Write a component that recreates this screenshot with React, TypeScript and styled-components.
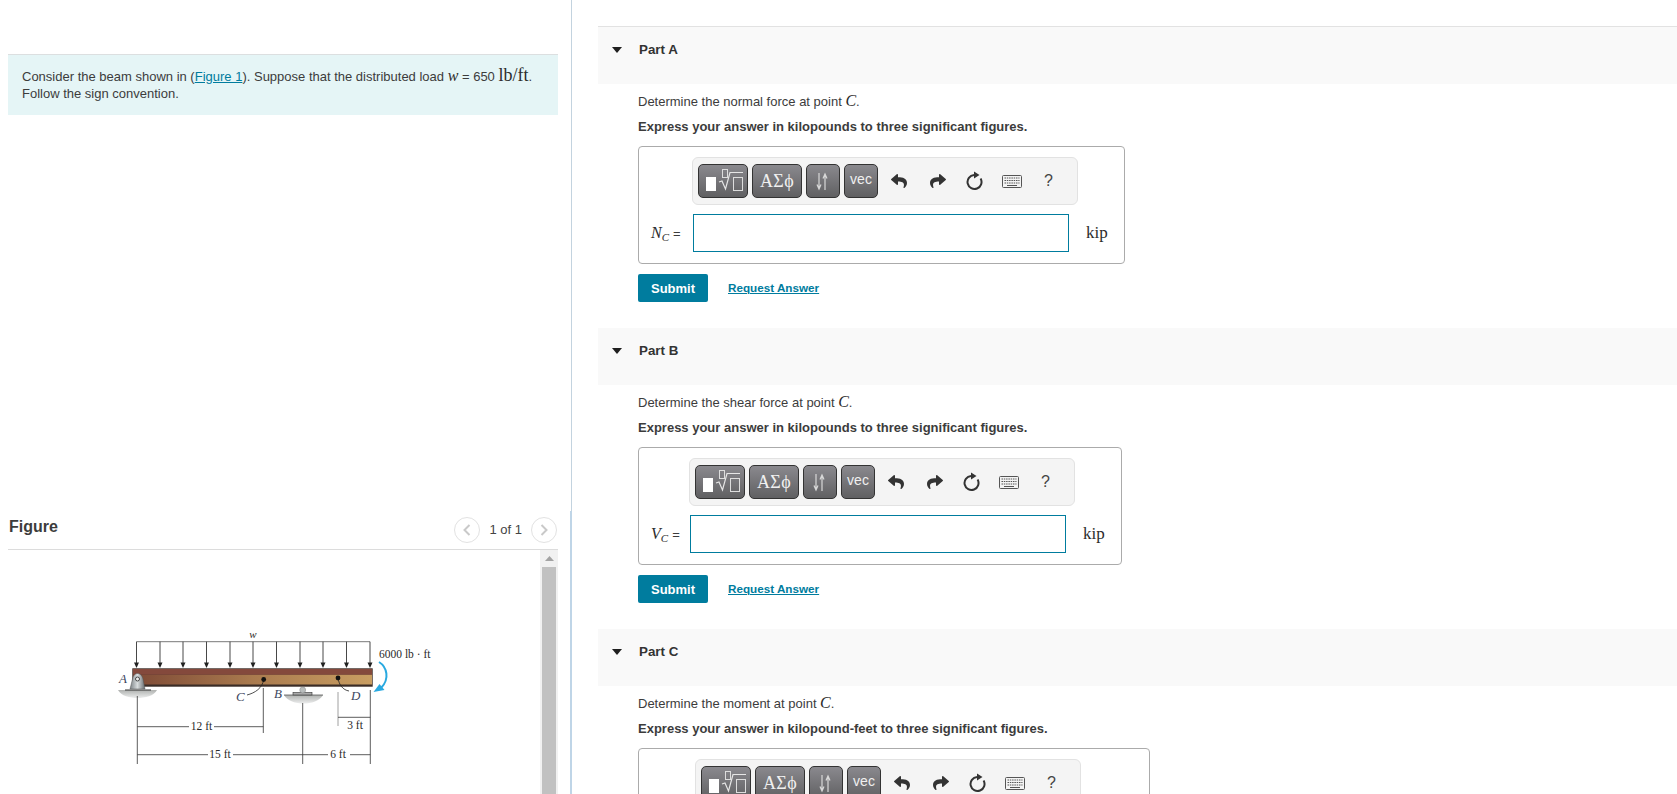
import React from "react";
import styled, { createGlobalStyle } from "styled-components";
import { FaReply, FaShare } from "react-icons/fa";

const Global = createGlobalStyle`
  html, body { margin: 0; padding: 0; background: #fff; }
  body { font-family: "Liberation Sans", Arial, sans-serif; color: #3c3c3c; }
`;

const Page = styled.div`
  display: flex;
  height: 794px;
  overflow: hidden;
`;
const LeftColumn = styled.aside`
  width: 550px;
  margin: 0 12px 0 8px;
  flex: none;
`;
const Divider = styled.div`
  width: 2px;
  flex: none;
  display: flex;
  flex-direction: column;
  align-items: flex-end;
`;
const DividerUpper = styled.div`
  width: 1px;
  height: 511px;
  background: #c3d3df;
`;
const DividerLower = styled.div`
  width: 2px;
  flex: 1;
  background: #bfd5e7;
`;
const RightColumn = styled.main`
  flex: 1;
  min-width: 0;
  padding: 26px 0 0 26px;
`;

const Prompt = styled.section`
  margin-top: 54px;
  height: 61px;
  box-sizing: border-box;
  border-top: 1px solid #dcdfe0;
  background: #e5f5f6;
  padding: 12px 14px;
  font-size: 13px;
  line-height: 17px;
`;
const TextLink = styled.a`
  color: #007c9e;
  text-decoration: underline;
`;
const Serif = styled.span`
  font-family: "Liberation Serif", "DejaVu Serif", serif;
  font-size: 16px;
  color: #2c2c2c;
`;
const Var = styled(Serif)`
  font-style: italic;
`;
const UnitInline = styled(Serif)`
  font-size: 18px;
  line-height: 0;
`;

const FigureHeader = styled.header`
  margin-top: 395px;
  height: 39px;
  display: flex;
  align-items: center;
  border-bottom: 1px solid #dcdcdc;
`;
const FigureTitle = styled.h2`
  margin: 0;
  padding-left: 1px;
  font-size: 16px;
  font-weight: 700;
  flex: 1;
  position: relative;
  top: -3px;
`;
const Pager = styled.div`
  display: flex;
  align-items: center;
  gap: 9px;
  margin-right: 1px;
  font-size: 13px;
  color: #444;
`;
const PageCircle = styled.span`
  width: 24px;
  height: 24px;
  border: 1px solid #e2e2e2;
  border-radius: 50%;
  display: flex;
  align-items: center;
  justify-content: center;
`;
const FigureBody = styled.div`
  display: flex;
  height: 246px;
`;
const FigureCanvas = styled.div`
  flex: 1;
  padding: 70px 0 0 92px;
`;
const Scrollbar = styled.div`
  width: 18px;
  background: #f1f1f1;
  display: flex;
  flex-direction: column;
  align-items: center;
`;
const ScrollUp = styled.div`
  height: 17px;
  width: 100%;
  display: flex;
  align-items: center;
  justify-content: center;
`;
const ScrollThumb = styled.div`
  width: 14px;
  flex: 1;
  background: #c1c1c1;
`;

const Part = styled.section`
  height: 301px;
  &:first-child {
    border-top: 1px solid #e2e2e2;
  }
`;
const PartHeader = styled.header`
  height: 57px;
  background: #f9f9f9;
  display: flex;
  align-items: flex-start;
  padding: 14px 0 0 14px;
  box-sizing: border-box;
`;
const Caret = styled.span`
  width: 0;
  height: 0;
  margin-top: 6px;
  border-left: 5.5px solid transparent;
  border-right: 5.5px solid transparent;
  border-top: 6px solid #1f1f1f;
`;
const PartTitle = styled.h3`
  margin: 0 0 0 17px;
  font-size: 13.33px;
  line-height: 17px;
  font-weight: 700;
  color: #333;
`;
const PartBody = styled.div`
  padding: 8px 0 0 40px;
`;
const Instruction = styled.p`
  margin: 0;
  height: 18px;
  line-height: 18px;
  font-size: 13px;
`;
const Emphasis = styled.p`
  margin: 8px 0 0;
  height: 18px;
  line-height: 18px;
  font-size: 13px;
  font-weight: 700;
`;
const AnswerBox = styled.div<{ $label: number; $unit: number }>`
  margin-top: 10px;
  box-sizing: border-box;
  width: ${(p) => p.$label + 376 + p.$unit}px;
  height: 118px;
  border: 1px solid #ababab;
  border-radius: 4px;
  display: grid;
  grid-template-columns: ${(p) => p.$label - 1}px 376px 1fr;
  grid-template-rows: 48px 38px;
  row-gap: 9px;
  padding-top: 10px;
`;
const Toolbar = styled.div`
  grid-column: 2 / 4;
  width: 386px;
  height: 48px;
  box-sizing: border-box;
  margin-left: -1px;
  background: #f4f4f4;
  border: 1px solid #e2e2e2;
  border-radius: 6px;
  display: flex;
  align-items: center;
  padding-left: 5px;
`;
const ToolGroup = styled.div`
  display: flex;
  gap: 4px;
`;
const ToolButton = styled.button<{ $w: number }>`
  width: ${(p) => p.$w}px;
  height: 34px;
  padding: 0;
  box-sizing: border-box;
  border: 1px solid #333;
  border-radius: 5px;
  background: linear-gradient(#8a898e, #606062);
  color: #f0f0f0;
  display: flex;
  align-items: center;
  justify-content: center;
`;
const GreekLabel = styled.span`
  font-family: "Liberation Serif", serif;
  font-size: 18px;
  letter-spacing: 0.3px;
`;
const VecLabel = styled.span`
  font-family: "Liberation Sans", sans-serif;
  font-size: 14px;
  margin-top: -4px;
`;
const PlainTools = styled.div`
  display: flex;
  align-items: center;
  color: #333;
`;
const PlainTool = styled.span<{ $w: number }>`
  width: ${(p) => p.$w}px;
  display: flex;
  justify-content: center;
  font-size: 16px;
`;
const Help = styled.span`
  font-size: 16px;
  color: #444;
`;
const FieldLabel = styled.div`
  display: flex;
  align-items: center;
  padding-left: 12px;
  font-size: 13px;
  gap: 4px;
`;
const Sub = styled.sub`
  font-size: 11px;
  vertical-align: -3px;
  line-height: 0;
`;
const Field = styled.input`
  box-sizing: border-box;
  width: 376px;
  height: 38px;
  margin: 0;
  border: 1px solid #007c9e;
  outline: none;
  padding: 0;
  background: #fff;
  border-radius: 0;
`;
const Unit = styled(Serif)`
  align-self: center;
  padding-left: 17px;
  font-size: 17px;
`;
const Actions = styled.div`
  margin-top: 10px;
  display: flex;
  align-items: center;
  gap: 20px;
`;
const Submit = styled.button`
  width: 70px;
  height: 28px;
  padding: 0;
  border: none;
  border-radius: 2px;
  background: #007c9e;
  color: #fff;
  font-family: inherit;
  font-size: 13px;
  font-weight: 700;
`;
const AnswerLink = styled(TextLink)`
  font-size: 11.7px;
  font-weight: 700;
  margin-top: -2px;
`;

const SqrtIcon = () => (
  <svg width="48" height="32" viewBox="1 1 48 32">
    <rect x="8" y="13" width="10" height="14" fill="#fff" />
    <rect x="24.5" y="5.5" width="5" height="8" fill="none" stroke="#ddd" />
    <path d="M21 18l3-1 3.5 8L32 8.5h13" fill="none" stroke="#e6e6e6" strokeWidth="1.2" />
    <rect x="35.5" y="13.5" width="9" height="13" fill="none" stroke="#ddd" />
  </svg>
);
const ArrowsIcon = () => (
  <svg width="32" height="32" viewBox="1 1 32 32">
    <path d="M13 9v15M11 20.5l2 4.5 2-4.5M19 26V11M17 14.5l2-4.5 2 4.5" fill="none" stroke="#d8d8d8" strokeWidth="1.2" />
  </svg>
);
const ResetIcon = () => (
  <svg width="18" height="20" viewBox="0 0 18 20">
    <path d="M14.6 7.5A7 7 0 1 1 8 4" fill="none" stroke="#333" strokeWidth="2" />
    <path d="M8 0.5l5.500 3.500L8 7.500z" fill="#333" />
  </svg>
);
const KeyboardIcon = () => (
  <svg width="20" height="13" viewBox="0 0 20 13">
    <rect x="0.5" y="0.5" width="19" height="12" rx="1" fill="#f4f4f4" stroke="#555" />
    <path d="M2.5 3h15M2.5 5.5h15M2.5 8h15" stroke="#555" strokeDasharray="1.5 .8" fill="none" />
    <path d="M5 10.5h10" stroke="#555" />
  </svg>
);

const Toolset = () => (
  <Toolbar>
    <ToolGroup>
      <ToolButton $w={50} aria-label="templates"><SqrtIcon /></ToolButton>
      <ToolButton $w={50}><GreekLabel>ΑΣϕ</GreekLabel></ToolButton>
      <ToolButton $w={34} aria-label="arrows"><ArrowsIcon /></ToolButton>
      <ToolButton $w={34}><VecLabel>vec</VecLabel></ToolButton>
    </ToolGroup>
    <PlainTools>
      <PlainTool $w={42}><FaReply size={16} /></PlainTool>
      <PlainTool $w={36}><FaShare size={16} /></PlainTool>
      <PlainTool $w={37}><ResetIcon /></PlainTool>
      <PlainTool $w={37}><KeyboardIcon /></PlainTool>
      <PlainTool $w={37}><Help>?</Help></PlainTool>
    </PlainTools>
  </Toolbar>
);

type PartData = {
  name: string;
  what: string;
  units: string;
  symbol: string;
  unit: string;
  labelW: number;
  unitW: number;
  fieldVisible: boolean;
};
const parts: PartData[] = [
  { name: "Part A", what: "normal force", units: "kilopounds", symbol: "N", unit: "kip", labelW: 55, unitW: 56, fieldVisible: true },
  { name: "Part B", what: "shear force", units: "kilopounds", symbol: "V", unit: "kip", labelW: 52, unitW: 56, fieldVisible: true },
  { name: "Part C", what: "moment", units: "kilopound-feet", symbol: "M", unit: "kip·ft", labelW: 58, unitW: 78, fieldVisible: false },
];

const arrowXs = [36.5, 60, 83, 106.5, 130, 153, 176.5, 200, 223, 246.5, 270];

const BeamFigure = () => (
  <svg width="360" height="174" viewBox="0 0 360 174" fontFamily="'Liberation Serif', serif" fontSize="11.5" fill="#2a2a2a">
    <defs>
      <linearGradient id="web" x1="0" x2="1" y1="0" y2="0">
        <stop offset="0" stopColor="#7e4a36" />
        <stop offset="0.5" stopColor="#a97a4e" />
        <stop offset="1" stopColor="#c99e62" />
      </linearGradient>
      <linearGradient id="ground" x1="0" x2="0" y1="0" y2="1">
        <stop offset="0" stopColor="#b0b2b0" />
        <stop offset="1" stopColor="#eceded" />
      </linearGradient>
      <linearGradient id="pin" x1="0" x2="1" y1="0" y2="0">
        <stop offset="0" stopColor="#7c8286" />
        <stop offset="0.5" stopColor="#d8dcdd" />
        <stop offset="1" stopColor="#666b6e" />
      </linearGradient>
    </defs>
    <path d="M36.5 21.7H270" stroke="#555" strokeWidth="0.8" fill="none" />
    {arrowXs.map((x) => (
      <g key={x}>
        <path d={`M${x} 21.7V44`} stroke="#333" strokeWidth="0.9" fill="none" />
        <path d={`M${x - 2.5} 42.5h5L${x} 48z`} fill="#222" />
      </g>
    ))}
    <rect x="32.3" y="48.3" width="240.4" height="18.4" fill="#3a2c26" />
    <rect x="33" y="49" width="239" height="5.8" fill="#84493c" />
    <rect x="33" y="54.8" width="239" height="9.7" fill="url(#web)" />
    <path d="M18 70h39c-3 6-12 8-19.500 8S21 76 18 70z" fill="url(#ground)" />
    <path d="M25 70h26" stroke="#333" strokeWidth="1" />
    <path d="M30 69l2.500-10c.8-4 3-5.500 5-5.500s4.500 1.500 5.500 5.500l2 10z" fill="url(#pin)" stroke="#555" strokeWidth="0.5" />
    <circle cx="37.5" cy="59" r="2" fill="#eee" stroke="#222" strokeWidth="0.8" />
    <path d="M184 75h39c-3 6-12 8.500-19.500 8.500S187 81 184 75z" fill="url(#ground)" />
    <path d="M184 75h39" stroke="#444" strokeWidth="0.7" />
    <rect x="193" y="72.5" width="19" height="2.5" fill="#aaa" stroke="#333" strokeWidth="0.6" />
    <circle cx="202.7" cy="70" r="3" fill="#b9bdbd" stroke="#777" strokeWidth="0.4" />
    <g stroke="#333" strokeWidth="0.8" fill="none">
      <path d="M37.3 76v68M163.3 68v45M202.7 83v61M270.3 70v74" />
      <path d="M238 72v34" stroke="#888" />
      <path d="M37.3 106.7H89M114 106.7H163.3M238 97.3h32.3M37.3 134.7H108M133 134.7H202.7M202.7 134.7H228M250 134.7H270.3" />
      <path d="M163.7 59.5C162.5 68 155 73 147 75M238 58c1 7 5 12 11 13" stroke="#222" />
    </g>
    <circle cx="163.7" cy="59.5" r="2.4" fill="#111" />
    <circle cx="238" cy="58" r="2.4" fill="#111" />
    <path d="M279 42c8 5 11 17 2 26" fill="none" stroke="#29a9e0" strokeWidth="2" />
    <path d="M273.5 72l11-2-5-6z" fill="#29a9e0" />
    <text x="153" y="18" fontStyle="italic" textAnchor="middle" fontSize="11">w</text>
    <text x="19" y="63" fontStyle="italic" fontSize="13" fill="#3c4660">A</text>
    <text x="136" y="81" fontStyle="italic" fontSize="13" fill="#3c4660">C</text>
    <text x="174" y="78" fontStyle="italic" fontSize="13" fill="#3c4660">B</text>
    <text x="251" y="80" fontStyle="italic" fontSize="13" fill="#3c4660">D</text>
    <text x="279" y="38">6000 lb · ft</text>
    <text x="101.5" y="110" textAnchor="middle">12 ft</text>
    <text x="255" y="109" textAnchor="middle">3 ft</text>
    <text x="120" y="138" textAnchor="middle">15 ft</text>
    <text x="238" y="138" textAnchor="middle">6 ft</text>
  </svg>
);

const Chevron = ({ d }: { d: string }) => (
  <svg width="10" height="14" viewBox="0 0 10 14">
    <path d={d} fill="none" stroke="#c9c9c9" strokeWidth="2" />
  </svg>
);

export default function App() {
  return (
    <>
      <Global />
      <Page>
        <LeftColumn>
          <Prompt>
            Consider the beam shown in (<TextLink href="#">Figure 1</TextLink>). Suppose that the distributed load{" "}
            <Var>w</Var> = 650 <UnitInline>lb/ft</UnitInline>.
            <br />
            Follow the sign convention.
          </Prompt>
          <FigureHeader>
            <FigureTitle>Figure</FigureTitle>
            <Pager>
              <PageCircle><Chevron d="M7.5 2L2.5 7l5 5" /></PageCircle>
              <span>1 of 1</span>
              <PageCircle><Chevron d="M2.5 2l5 5-5 5" /></PageCircle>
            </Pager>
          </FigureHeader>
          <FigureBody>
            <FigureCanvas>
              <BeamFigure />
            </FigureCanvas>
            <Scrollbar>
              <ScrollUp>
                <svg width="9" height="5" viewBox="0 0 9 5"><path d="M0 5L4.5 0 9 5z" fill="#a3a3a3" /></svg>
              </ScrollUp>
              <ScrollThumb />
            </Scrollbar>
          </FigureBody>
        </LeftColumn>
        <Divider>
          <DividerUpper />
          <DividerLower />
        </Divider>
        <RightColumn>
          {parts.map((p) => (
            <Part key={p.name}>
              <PartHeader>
                <Caret />
                <PartTitle>{p.name}</PartTitle>
              </PartHeader>
              <PartBody>
                <Instruction>
                  Determine the {p.what} at point <Var>C</Var>.
                </Instruction>
                <Emphasis>Express your answer in {p.units} to three significant figures.</Emphasis>
                <AnswerBox $label={p.labelW} $unit={p.unitW}>
                  <Toolset />
                  {p.fieldVisible && (
                    <>
                      <FieldLabel>
                        <Var>
                          {p.symbol}
                          <Sub>C</Sub>
                        </Var>
                        <span>=</span>
                      </FieldLabel>
                      <Field aria-label={p.symbol} />
                      <Unit>{p.unit}</Unit>
                    </>
                  )}
                </AnswerBox>
                {p.fieldVisible && (
                  <Actions>
                    <Submit>Submit</Submit>
                    <AnswerLink href="#">Request Answer</AnswerLink>
                  </Actions>
                )}
              </PartBody>
            </Part>
          ))}
        </RightColumn>
      </Page>
    </>
  );
}
